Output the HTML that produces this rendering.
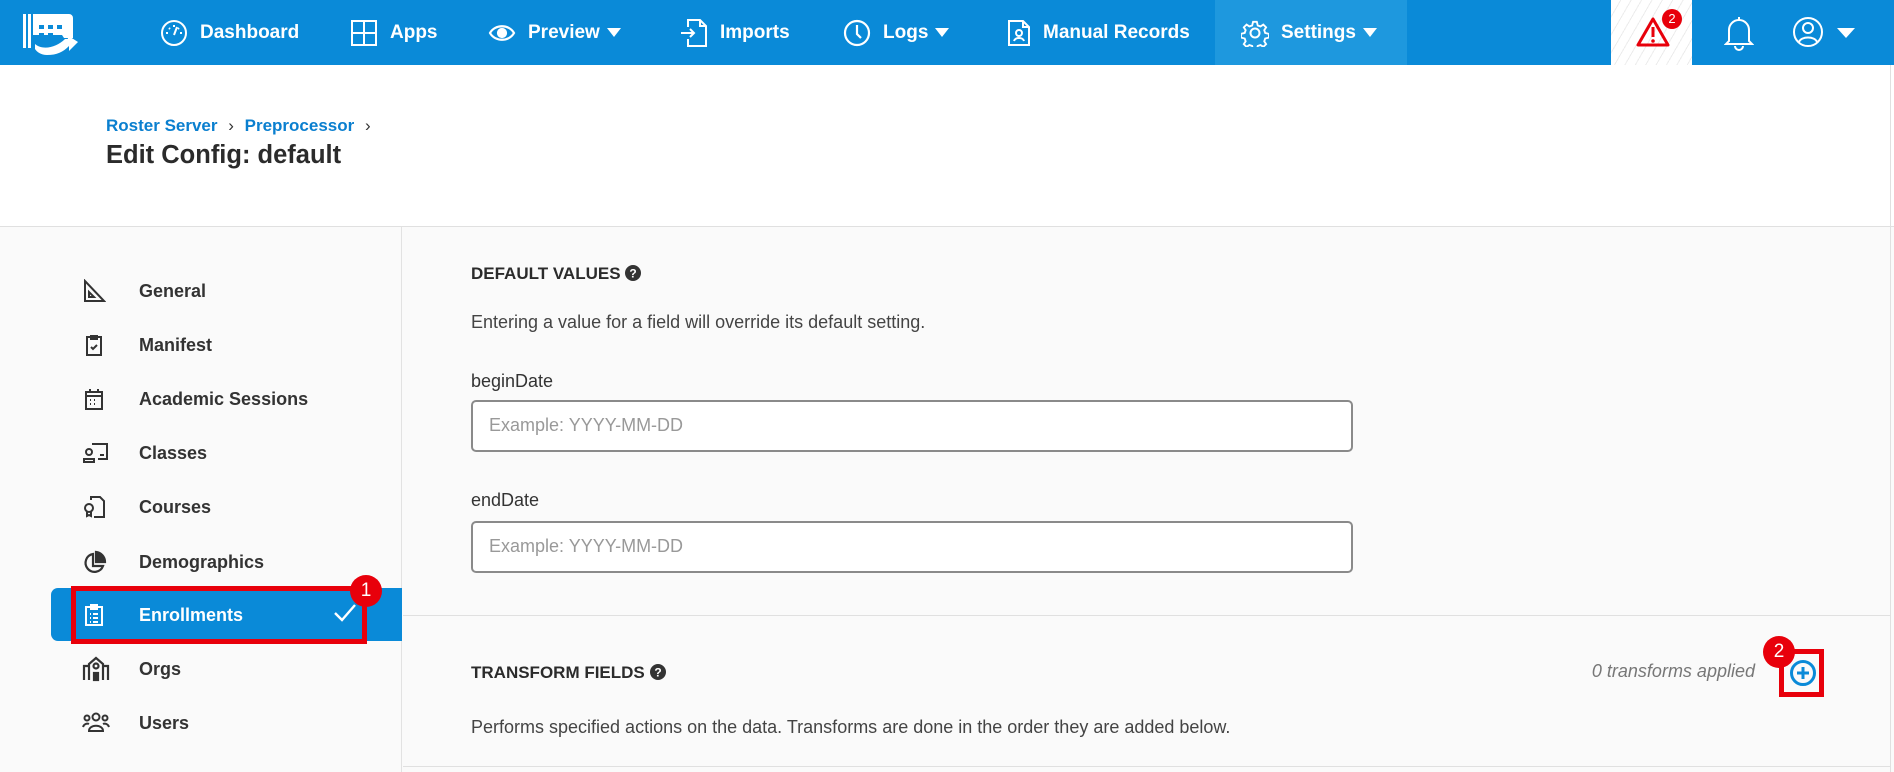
<!DOCTYPE html>
<html><head><meta charset="utf-8"><style>
*{box-sizing:border-box;margin:0;padding:0}
body{width:1894px;height:772px;overflow:hidden;background:#fafafa;font-family:"Liberation Sans",sans-serif;color:#333;position:relative}
.nav{position:absolute;left:0;top:0;width:1894px;height:65px;background:#0a8ad8}
.ni{position:absolute;top:0;height:65px;display:flex;align-items:center;color:#fff;font-size:19px;font-weight:bold}
.ni svg{margin-right:12px}
.car{display:inline-block;width:0;height:0;border-left:7px solid transparent;border-right:7px solid transparent;border-top:9px solid #fff;margin-left:7px}
.abs{position:absolute}
.side{position:absolute;left:0;top:227px;width:402px;height:545px;border-right:1px solid #e2e2e2}
.si{position:absolute;left:0;height:40px;display:flex;align-items:center;font-size:18px;font-weight:bold;color:#333}
.si svg{position:absolute;left:82px}
.si span{position:absolute;left:139px;white-space:nowrap}
.lbl{position:absolute;left:471px;font-size:18px}
.inp{position:absolute;left:471px;width:882px;height:52px;border:2px solid #8a8a8a;border-radius:5px;background:#fff;font-size:18px;color:#999;padding:13px 0 0 16px}
.badge{position:absolute;width:32px;height:32px;border-radius:50%;background:#e8000b;color:#fff;font-size:19px;text-align:center;line-height:32px}
</style></head><body>
<div class="nav">
 <svg class="abs" style="left:20px;top:10px" width="62" height="46" viewBox="0 0 62 46"><g fill="#fff"><rect x="3" y="4" width="3" height="34"/><rect x="8" y="4" width="3" height="34"/><path d="M13 4h36a4 4 0 0 1 4 4v20h-9l-2-3H13z"/><path d="M15 34c8 7 22 3 30-5h3l-1-4 11 7-9 9v-5c-6 6-12 9-22 9c-6 0-10-3-12-6z"/></g><g fill="#0a8ad8"><rect x="19" y="15" width="5" height="4"/><rect x="28" y="15" width="5" height="4"/><rect x="37" y="15" width="5" height="4"/><rect x="19" y="23" width="5" height="4"/><rect x="28" y="23" width="5" height="4"/></g></svg>
 <div class="ni" style="left:160px"><svg width="28" height="28" viewBox="0 0 28 28" fill="none" stroke="#fff" stroke-width="2"><circle cx="14" cy="14" r="12"/><path d="M14 16l3-8M6 14h2M20 14h2M9 9l1 1M19 9l-1 1M14 6v2"/></svg>Dashboard</div>
 <div class="ni" style="left:350px"><svg width="28" height="28" viewBox="0 0 28 28" fill="none" stroke="#fff" stroke-width="2"><rect x="2" y="2" width="24" height="24"/><path d="M14 2v24M2 14h24"/></svg>Apps</div>
 <div class="ni" style="left:488px"><svg width="28" height="28" viewBox="0 0 28 28" fill="none" stroke="#fff" stroke-width="2.2"><path d="M2 14c5-9 19-9 24 0c-5 9-19 9-24 0z"/><circle cx="14" cy="14" r="4" fill="#fff"/></svg>Preview<span class="car"></span></div>
 <div class="ni" style="left:680px"><svg width="28" height="30" viewBox="0 0 28 30" fill="none" stroke="#fff" stroke-width="2"><path d="M8 9V2h12l6 6v20H8v-7M20 2v6h6M1 15h13M10 11l4 4-4 4"/></svg>Imports</div>
 <div class="ni" style="left:843px"><svg width="28" height="28" viewBox="0 0 28 28" fill="none" stroke="#fff" stroke-width="2.2"><circle cx="14" cy="14" r="12"/><path d="M14 6v9l4 4"/></svg>Logs<span class="car"></span></div>
 <div class="ni" style="left:1007px"><svg width="24" height="28" viewBox="0 0 24 28" fill="none" stroke="#fff" stroke-width="2"><path d="M2 2h14l6 6v18H2zM16 2v6h6"/><circle cx="12" cy="14" r="3"/><path d="M7 22c1-4 9-4 10 0"/></svg>Manual Records</div>
 <div class="abs" style="left:1215px;top:0;width:192px;height:65px;background:#1e98de"></div>
 <div class="ni" style="left:1241px"><svg width="28" height="28" viewBox="0 0 28 28" fill="none" stroke="#fff" stroke-width="2"><path d="M12 2h4l1 4 3 1 3-2 3 3-2 3 1 3 4 1v4l-4 1-1 3 2 3-3 3-3-2-3 1-1 4h-4l-1-4-3-1-3 2-3-3 2-3-1-3-4-1v-4l4-1 1-3-2-3 3-3 3 2 3-1z" transform="scale(.93) translate(1 1)"/><circle cx="14" cy="14" r="4.5"/></svg>Settings<span class="car"></span></div>
 <div class="abs" style="left:1611px;top:0;width:81px;height:65px;background:repeating-linear-gradient(120deg,#fff 0 8px,#ececec 8px 9px)"></div>
 <svg class="abs" style="left:1636px;top:17px" width="34" height="30" viewBox="0 0 34 30"><path d="M17 2L2 28h30z" fill="none" stroke="#e8000b" stroke-width="3" stroke-linejoin="round"/><rect x="15.5" y="10" width="3" height="10" fill="#e8000b"/><circle cx="17" cy="24" r="1.8" fill="#e8000b"/></svg>
 <div class="badge" style="left:1662px;top:9px;width:20px;height:20px;line-height:20px;font-size:13px">2</div>
 <svg class="abs" style="left:1724px;top:15px" width="30" height="36" viewBox="0 0 30 36" fill="none" stroke="#fff" stroke-width="2"><path d="M15 2v3M5 26V15a10 10 0 0 1 20 0v11l3 3H2z"/><path d="M11 31a4 4 0 0 0 8 0"/></svg>
 <svg class="abs" style="left:1792px;top:16px" width="32" height="32" viewBox="0 0 32 32" fill="none" stroke="#fff" stroke-width="2"><circle cx="16" cy="16" r="14"/><circle cx="16" cy="12" r="5"/><path d="M7 26c2-6 16-6 18 0"/></svg>
 <span class="car abs" style="left:1830px;top:28px;border-left-width:9px;border-right-width:9px;border-top-width:10px"></span>
</div>
<div class="abs" style="left:0;top:65px;width:1894px;height:162px;background:#fff;border-bottom:1px solid #e0e0e0"></div>
<div class="abs" style="left:106px;top:116px;font-size:17px;font-weight:bold;color:#0a7fcf">Roster Server <span style="color:#333;font-weight:normal;margin:0 6px">&#x203A;</span> Preprocessor <span style="color:#333;font-weight:normal;margin-left:6px">&#x203A;</span></div>
<div class="abs" style="left:106px;top:141px;font-size:25.5px;font-weight:bold;color:#2b2b2b">Edit Config: default</div>
<div class="side">
 <div class="abs" style="left:51px;top:361px;width:351px;height:53px;background:#0a8ad8;border-radius:7px 0 0 7px"></div>
 <div class="si" style="top:44px"><svg width="24" height="24" viewBox="0 0 24 24" fill="none" stroke="#333" stroke-width="2"><path d="M3 2v20h19zM7 13v5h5z"/></svg><span>General</span></div>
 <div class="si" style="top:98px"><svg width="24" height="24" viewBox="0 0 24 24" fill="none" stroke="#333" stroke-width="2"><rect x="5" y="4" width="14" height="18"/><path d="M9 3h6v3H9zM9 14l2 2 4-4"/></svg><span>Manifest</span></div>
 <div class="si" style="top:152px"><svg width="24" height="24" viewBox="0 0 24 24" fill="none" stroke="#333" stroke-width="2"><rect x="4" y="5" width="16" height="17"/><path d="M4 9h16M8 2v4M16 2v4M8 13h1M12 13h1M16 13h0M8 17h1M12 17h1M16 17h0"/></svg><span>Academic Sessions</span></div>
 <div class="si" style="top:206px"><svg width="28" height="24" viewBox="0 0 28 24" fill="none" stroke="#333" stroke-width="2"><path d="M10 3h15v15H16M18 14h4"/><circle cx="7" cy="11" r="3"/><path d="M2 21v-3h10v3z"/></svg><span>Classes</span></div>
 <div class="si" style="top:260px"><svg width="24" height="24" viewBox="0 0 24 24" fill="none" stroke="#333" stroke-width="2"><path d="M9 5V2h9l4 4v16H12"/><circle cx="7" cy="13" r="4"/><path d="M5 17v4l2-1 2 1v-4"/></svg><span>Courses</span></div>
 <div class="si" style="top:315px"><svg width="26" height="24" viewBox="0 0 26 24" fill="none" stroke="#333" stroke-width="2.2"><path d="M11 4a9 9 0 1 0 10 12H11z"/><path d="M14 2v10h9A10 10 0 0 0 14 2z" fill="#333"/></svg><span>Demographics</span></div>
 <div class="si" style="top:368px;color:#fff"><svg width="24" height="24" viewBox="0 0 24 24" fill="none" stroke="#fff" stroke-width="2"><rect x="4" y="4" width="16" height="18"/><path d="M9 2h6v4H9zM8 11h1M11 11h5M8 15h1M11 15h5M8 19h1M11 19h5"/></svg><span>Enrollments</span></div>
 <svg class="abs" style="left:333px;top:376px" width="24" height="20" viewBox="0 0 24 20" fill="none" stroke="#fff" stroke-width="2.4"><path d="M2 10l7 7L22 2"/></svg>
 <div class="abs" style="left:71px;top:359px;width:296px;height:58px;border:5px solid #e8000b"></div>
 <div class="badge" style="left:350px;top:348px">1</div>
 <div class="si" style="top:422px"><svg width="28" height="26" viewBox="0 0 28 26" fill="none" stroke="#333" stroke-width="2.2"><path d="M2 24V10h4M26 24V10h-4M7 24V8l7-6 7 6v16"/><circle cx="14" cy="10" r="2.5"/><rect x="12" y="17" width="4" height="7" fill="#333"/></svg><span>Orgs</span></div>
 <div class="si" style="top:476px"><svg width="28" height="24" viewBox="0 0 28 24" fill="none" stroke="#333" stroke-width="2"><circle cx="14" cy="6" r="3.5"/><circle cx="5" cy="7" r="2.5"/><circle cx="23" cy="7" r="2.5"/><path d="M7 20c0-7 14-7 14 0zM1 16c1-3 4-4 6-3M27 16c-1-3-4-4-6-3"/></svg><span>Users</span></div>
</div>
<div class="abs" style="left:1890px;top:65px;width:1px;height:707px;background:#e0e0e0"></div>
<div class="abs" style="left:471px;top:264px;font-size:17px;font-weight:bold;color:#2b2b2b">DEFAULT VALUES <svg width="16" height="16" viewBox="0 0 16 16" style="vertical-align:-2px"><circle cx="8" cy="8" r="8" fill="#333"/><text x="8" y="12.5" text-anchor="middle" font-size="12" font-weight="bold" fill="#fff" font-family="Liberation Sans">?</text></svg></div>
<div class="lbl" style="top:312px;color:#444">Entering a value for a field will override its default setting.</div>
<div class="lbl" style="top:371px">beginDate</div>
<div class="inp" style="top:400px">Example: YYYY-MM-DD</div>
<div class="lbl" style="top:490px">endDate</div>
<div class="inp" style="top:521px">Example: YYYY-MM-DD</div>
<div class="abs" style="left:403px;top:615px;width:1487px;height:1px;background:#e0e0e0"></div>
<div class="abs" style="left:471px;top:663px;font-size:17px;font-weight:bold;color:#2b2b2b">TRANSFORM FIELDS <svg width="16" height="16" viewBox="0 0 16 16" style="vertical-align:-2px"><circle cx="8" cy="8" r="8" fill="#333"/><text x="8" y="12.5" text-anchor="middle" font-size="12" font-weight="bold" fill="#fff" font-family="Liberation Sans">?</text></svg></div>
<div class="abs" style="left:1500px;width:255px;top:661px;font-size:18px;font-style:italic;color:#777;text-align:right">0 transforms applied</div>
<svg class="abs" style="left:1789px;top:659px" width="28" height="28" viewBox="0 0 28 28" fill="none" stroke="#0a8ad8" stroke-width="3"><circle cx="14" cy="14" r="11.5"/><path d="M14 8v12M8 14h12"/></svg>
<div class="abs" style="left:1779px;top:649px;width:45px;height:48px;border:5px solid #e8000b"></div>
<div class="badge" style="left:1763px;top:636px">2</div>
<div class="lbl" style="top:717px;color:#444">Performs specified actions on the data. Transforms are done in the order they are added below.</div>
<div class="abs" style="left:403px;top:766px;width:1487px;height:1px;background:#e0e0e0"></div>
</body></html>
